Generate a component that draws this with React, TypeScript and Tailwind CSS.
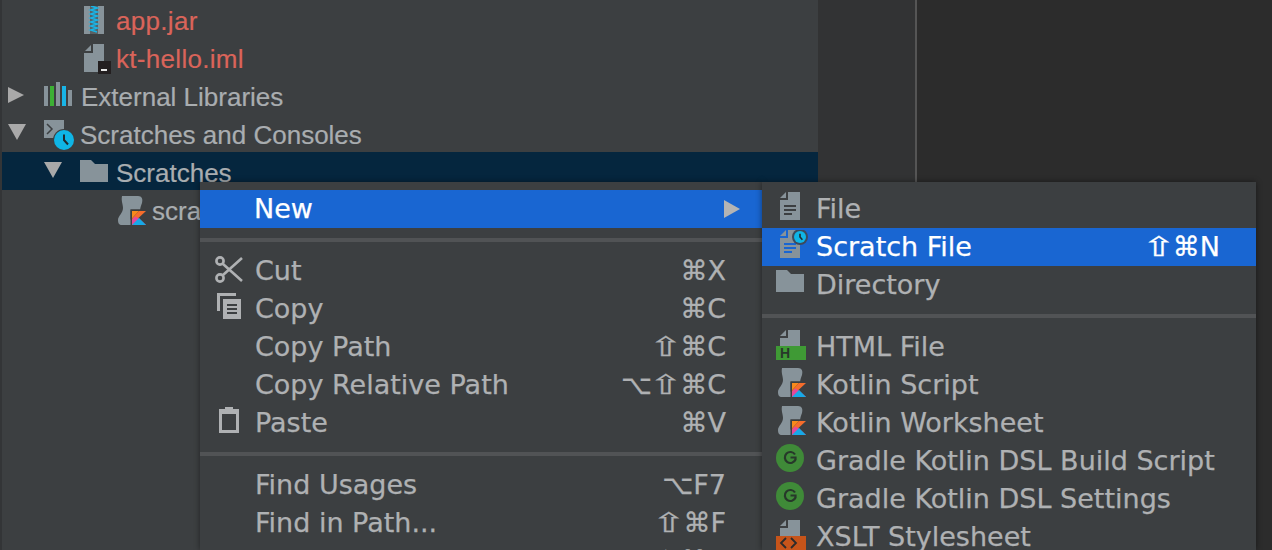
import React from "react";

const Triangle = ({ dir, className = "" }: { dir: "r" | "d" | "m"; className?: string }) =>
  dir === "d" ? (
    <svg width="18" height="16" viewBox="0 0 18 16" className={className}>
      <polygon points="0,0 18,0 9,16" fill="#a9a9a9" />
    </svg>
  ) : dir === "m" ? (
    <svg width="16" height="18" viewBox="0 0 16 18" className={className}>
      <polygon points="0,0 16,9 0,18" fill="#b4b4b4" />
    </svg>
  ) : (
    <svg width="16" height="16" viewBox="0 0 16 16" className={className}>
      <polygon points="0,0 16,8 0,16" fill="#a9a9a9" />
    </svg>
  );

const Kotlin = ({ x, y }: { x: number; y: number }) => (
  <g transform={`translate(${x} ${y})`}>
    <rect x="-1.5" y="-1.5" width="10" height="17" fill="#3c3f41" />
    <rect x="-1.5" y="-1.5" width="17" height="10" fill="#3c3f41" />
    <polygon points="0,0 7,0 0,7.500" fill="#f88a1c" />
    <polygon points="7,0 14,0 0,13 0,7.500" fill="#f56d2c" />
    <polygon points="0,14 0,8.500 3,5.500 7,7.500 14,14" fill="#e4489b" />
    <polygon points="7,7 14,14 0,14" fill="#17a9e8" />
  </g>
);

const KotlinFile = () => (
  <svg width="32" height="30" viewBox="0 0 32 30">
    <path d="M8 0H24C28 0 29 3 28 7C27 10 26 12 26 15V29H8C5 29 4 27 4 24C4 20 9 17 9 12C9 8 7 5 8 0Z" fill="#87939a" />
    <Kotlin x={18} y={15} />
  </svg>
);

const PlainFile = () => (
  <svg width="20" height="28" viewBox="0 0 20 28">
    <path d="M8 0h12v28H0V8h8z" fill="#87939a" />
    <path d="M6 0v6H0z" fill="#87939a" />
    <g fill="#3c3f41">
      <rect x="4" y="13" width="12" height="2" />
      <rect x="4" y="17" width="12" height="2" />
      <rect x="4" y="21" width="8" height="2" />
    </g>
  </svg>
);

const Jar = () => (
  <svg width="20" height="28" viewBox="0 0 20 28">
    <rect width="20" height="28" fill="#87939a" />
    <rect x="6" width="8" height="28" fill="#3c3f41" opacity="0.6" />
    <path d="M7 0l6 2-6 2 6 2-6 2 6 2-6 2 6 2-6 2 6 2-6 2 6 2-6 2 6 2" fill="none" stroke="#19b4e6" strokeWidth="1.800" />
  </svg>
);

const Iml = () => (
  <svg width="27" height="30" viewBox="0 0 27 30">
    <path d="M9 0h11v28H0V9h9z" fill="#87939a" />
    <path d="M7 1v6H1z" fill="#87939a" />
    <rect x="14" y="17" width="13" height="13" fill="#231f20" />
    <rect x="17" y="25" width="6" height="2" fill="#e8e8e8" />
  </svg>
);

const Libraries = () => (
  <svg width="28" height="24" viewBox="0 0 28 24">
    <rect x="0" y="4" width="4" height="20" fill="#87939a" />
    <rect x="6" y="4" width="4" height="20" fill="#3cb034" />
    <rect x="12" y="0" width="4" height="24" fill="#87939a" />
    <rect x="18" y="4" width="4" height="20" fill="#19b4e6" />
    <rect x="24" y="8" width="4" height="16" fill="#87939a" />
  </svg>
);

const Clock = ({ cx, cy, r, stroke = 1.6 }: { cx: number; cy: number; r: number; stroke?: number }) => (
  <g>
    <circle cx={cx} cy={cy} r={r} fill="#0fb5e6" />
    <path d={`M${cx} ${cy - r * 0.55}V${cy}L${cx + r * 0.4} ${cy + r * 0.45}`} fill="none" stroke="#1f2a30" strokeWidth={stroke} />
  </g>
);

const Scratches = () => (
  <svg width="30" height="30" viewBox="0 0 30 30">
    <rect x="0" y="0" width="20" height="18" fill="#87939a" />
    <path d="M3 4l5 5-5 5" fill="none" stroke="#3c3f41" strokeWidth="1.500" />
    <circle cx="20" cy="20" r="11" fill="#3c3f41" />
    <Clock cx={20} cy={20} r={10} stroke={2} />
  </svg>
);

const Folder = () => (
  <svg width="28" height="22" viewBox="0 0 28 22">
    <path d="M0 0h11l4 4h13v18H0z" fill="#87939a" />
  </svg>
);

const Scissors = () => (
  <svg width="28" height="27" viewBox="0 0 28 27" fill="none" stroke="#afb1b3" strokeWidth="2.600">
    <circle cx="5" cy="5" r="3.600" />
    <circle cx="5" cy="22" r="3.600" />
    <path d="M8 8L27 25M8 19L27 2" />
  </svg>
);

const Copy = () => (
  <svg width="24" height="26" viewBox="0 0 24 26">
    <path d="M0 0h19v3H3V18H0z" fill="#afb1b3" />
    <rect x="6" y="6" width="18" height="20" fill="#afb1b3" />
    <g fill="#3c3f41">
      <rect x="10" y="11" width="10" height="2" />
      <rect x="10" y="15" width="10" height="2" />
      <rect x="10" y="19" width="10" height="2" />
    </g>
  </svg>
);

const Paste = () => (
  <svg width="20" height="26" viewBox="0 0 20 26">
    <path d="M0 2h6V0h8v2h6v24H0zM3 7v16h14V7z" fill="#afb1b3" fillRule="evenodd" />
  </svg>
);

const BadgeFile = ({ color, children }: { color: string; children: React.ReactNode }) => (
  <svg width="30" height="30" viewBox="0 0 30 30">
    <path d="M12 0h12v16H4V8h8z" fill="#87939a" />
    <path d="M10 0v6H4z" fill="#87939a" />
    <rect x="0" y="16" width="30" height="14" fill={color} />
    {children}
  </svg>
);

const Gradle = () => (
  <svg width="28" height="28" viewBox="0 0 28 28">
    <circle cx="14" cy="14" r="14" fill="#3f8a38" />
    <path d="M19 10.500a5.500 5.500 0 1 0 .5 5V13.500h-5" fill="none" stroke="#27382a" strokeWidth="2.200" />
  </svg>
);

const ScratchFile = () => (
  <svg width="40" height="28" viewBox="0 0 40 28">
    <path d="M18 0h12v28H10V8h8z" fill="#87939a" />
    <path d="M16 0v6H10z" fill="#87939a" />
    <g fill="#1966d2">
      <rect x="14" y="13" width="12" height="2" />
      <rect x="14" y="17" width="12" height="2" />
      <rect x="14" y="21" width="8" height="2" />
    </g>
    <circle cx="30" cy="7" r="8" fill="#3c4a5c" />
    <Clock cx={30} cy={7} r={6} stroke={1.600} />
  </svg>
);

const Shortcut = ({ keys }: { keys: string }) => (
  <span className="whitespace-nowrap">
    {keys.split("").map((k, i) =>
      k === "⇧" ? (
        <span key={i} className="inline-block w-[28px] scale-x-[1.5] text-center">
          {k}
        </span>
      ) : (
        <span key={i}>{k}</span>
      )
    )}
  </span>
);

type Item = { label: string; icon?: React.ReactNode; shortcut?: string; iconCol: string };

const Row = ({ label, icon, shortcut, iconCol }: Item) => (
  <div className="flex h-[38px] shrink-0 items-center text-[#afb1b3]">
    <div className={`flex h-full shrink-0 items-center justify-center ${iconCol}`}>{icon}</div>
    <span className="flex-1 whitespace-nowrap">{label}</span>
    {shortcut && <Shortcut keys={shortcut} />}
  </div>
);

const Sep = () => (
  <div className="flex h-[24px] shrink-0 items-center pb-[1px]">
    <div className="h-[4px] w-full bg-[#515355]" />
  </div>
);

const Menu = ({ className, children }: { className: string; children: React.ReactNode }) => (
  <div
    className={`absolute top-[182px] bottom-0 flex flex-col overflow-hidden bg-[#3c3f41] pt-[8px] font-['DejaVu_Sans',sans-serif] text-[27px] [-webkit-text-stroke:0.25px] shadow-[0_0_6px_rgba(0,0,0,0.45)] ${className}`}
  >
    {children}
  </div>
);

const Tree = ({
  pad,
  arrow,
  icon,
  label,
  labelClass = "text-[#a9adb0]",
  sel,
}: {
  pad: string;
  arrow?: React.ReactNode;
  icon: React.ReactNode;
  label: React.ReactNode;
  labelClass?: string;
  sel?: boolean;
}) => (
  <div className={`flex h-[38px] shrink-0 items-center ${pad} ${sel ? "bg-[#05263e]" : ""}`}>
    {arrow}
    {icon}
    <span className={`whitespace-nowrap pt-[4px] ${labelClass}`}>{label}</span>
  </div>
);

const mainCol = "w-[55px] pl-[2px]";
const subCol = "w-[54px] pl-[2px]";
const red = "text-[#d9645a] tracking-[0.3px]";

export default function App() {
  return (
    <div className="relative flex h-[550px] w-[1272px] overflow-hidden bg-[#2c2c2c]">
      <div className="flex h-full w-[818px] shrink-0 flex-col border-l-2 border-[#333537] bg-[#3c3f41] font-['Liberation_Sans',sans-serif] text-[26px] [-webkit-text-stroke:0.2px]">
        <Tree pad="pl-[82px]" icon={<span className="mr-[12px] mt-[2px] flex"><Jar /></span>} label="app.jar" labelClass={red} />
        <Tree pad="pl-[82px]" icon={<span className="mr-[5px] mt-[4px] flex"><Iml /></span>} label="kt-hello.iml" labelClass={red} />
        <Tree pad="pl-[6px]" arrow={<Triangle dir="r" className="shrink-0" />} icon={<span className="mb-[2px] ml-[20px] mr-[9px] flex"><Libraries /></span>} label="External Libraries" />
        <Tree pad="pl-[6px]" arrow={<Triangle dir="d" className="mb-[3px] shrink-0" />} icon={<span className="ml-[18px] mr-[6px] mt-[4px] flex"><Scratches /></span>} label="Scratches and Consoles" />
        <Tree pad="pl-[42px]" sel arrow={<Triangle dir="d" className="mb-[3px] shrink-0" />} icon={<span className="ml-[18px] mr-[8px] flex"><Folder /></span>} label="Scratches" />
        <Tree pad="pl-[112px]" icon={<span className="mr-[6px] mt-[4px] flex"><KotlinFile /></span>} label={<span className="block w-[48px] overflow-hidden">scratch.kts</span>} />
      </div>
      <div className="h-full w-[99px] shrink-0 border-r-2 border-[#555555] bg-[#323334]" />
      <div className="h-full flex-1" />

      <Menu className="left-[200px] w-[562px]">
        <div className="flex h-[38px] shrink-0 items-center bg-[#1966d2] pl-[54px] pr-[22px] text-white">
          <span className="flex-1">New</span>
          <Triangle dir="m" />
        </div>
        <Sep />
        <div className="flex flex-col pr-[36px]">
          <Row iconCol={mainCol} label="Cut" shortcut="⌘X" icon={<span className="mb-[4px] flex"><Scissors /></span>} />
          <Row iconCol={mainCol} label="Copy" shortcut="⌘C" icon={<span className="mb-[6px] flex"><Copy /></span>} />
          <Row iconCol={mainCol} label="Copy Path" shortcut="⇧⌘C" />
          <Row iconCol={mainCol} label="Copy Relative Path" shortcut="⌥⇧⌘C" />
          <Row iconCol={mainCol} label="Paste" shortcut="⌘V" icon={<span className="mb-[6px] flex"><Paste /></span>} />
        </div>
        <Sep />
        <div className="flex flex-col pr-[36px]">
          <Row iconCol={mainCol} label="Find Usages" shortcut="⌥F7" />
          <Row iconCol={mainCol} label="Find in Path..." shortcut="⇧⌘F" />
          <Row iconCol={mainCol} label="Replace in Path..." shortcut="⇧⌘R" />
        </div>
      </Menu>

      <Menu className="left-[762px] w-[494px]">
        <Row iconCol={subCol} label="File" icon={<span className="mb-[6px] flex"><PlainFile /></span>} />
        <div className="flex h-[38px] shrink-0 items-center bg-[#1966d2] pr-[36px] text-white">
          <div className={`flex h-full shrink-0 items-center justify-center ${subCol}`}>
            <span className="mb-[6px] flex"><ScratchFile /></span>
          </div>
          <span className="flex-1">Scratch File</span>
          <Shortcut keys="⇧⌘N" />
        </div>
        <Row iconCol={subCol} label="Directory" icon={<span className="mb-[8px] flex"><Folder /></span>} />
        <Sep />
        <Row iconCol={subCol} label="HTML File" icon={
          <span className="mb-[4px] ml-[2px] flex">
            <BadgeFile color="#3f9a35">
              <text x="4" y="28" fontSize="14" fontWeight="bold" fill="#27382a" fontFamily="Liberation Sans">H</text>
            </BadgeFile>
          </span>
        } />
        <Row iconCol={subCol} label="Kotlin Script" icon={<span className="mb-[5px] flex"><KotlinFile /></span>} />
        <Row iconCol={subCol} label="Kotlin Worksheet" icon={<span className="mb-[5px] flex"><KotlinFile /></span>} />
        <Row iconCol={subCol} label="Gradle Kotlin DSL Build Script" icon={<span className="mb-[6px] flex"><Gradle /></span>} />
        <Row iconCol={subCol} label="Gradle Kotlin DSL Settings" icon={<span className="mb-[6px] flex"><Gradle /></span>} />
        <Row iconCol={subCol} label="XSLT Stylesheet" icon={
          <span className="mb-[4px] ml-[2px] flex">
            <BadgeFile color="#c6541a">
              <path d="M10 18l-5 5 5 5M15 18l5 5-5 5" fill="none" stroke="#2b2b2b" strokeWidth="1.800" />
            </BadgeFile>
          </span>
        } />
      </Menu>
    </div>
  );
}
